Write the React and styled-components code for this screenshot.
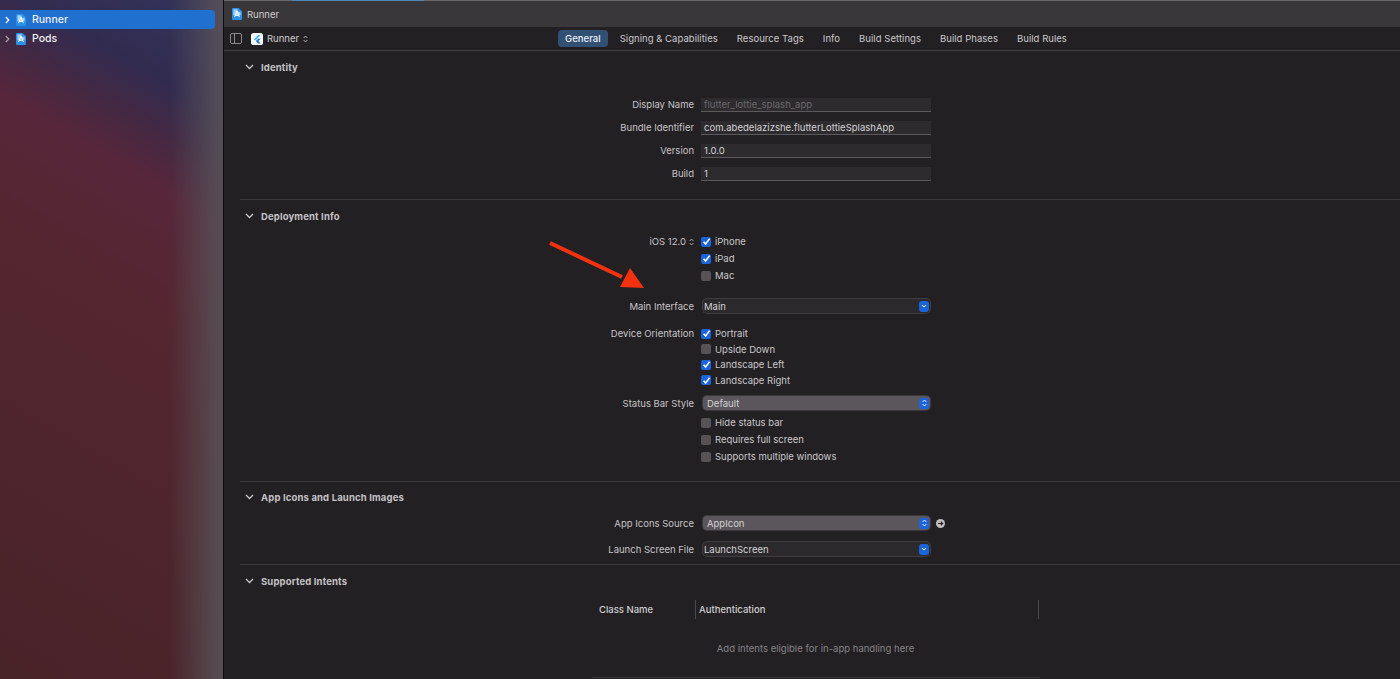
import React from 'react';
import styled, { createGlobalStyle } from 'styled-components';

const GlobalStyle = createGlobalStyle`
  html, body, #root {
    margin: 0;
    height: 100%;
    overflow: hidden;
  }
  body {
    background: #232024;
    font-family: Inter, "Liberation Sans", sans-serif;
    -webkit-font-smoothing: antialiased;
  }
`;

const FileIcon = () => (
  <svg width="10" height="12" viewBox="0 0 10 12">
    <path d="M1 0h5.6L10 3.2V11a1 1 0 0 1-1 1H1a1 1 0 0 1-1-1V1a1 1 0 0 1 1-1z" fill="#2b90e8" />
    <path d="M1.4 1.2h4.2v2.6h3v3.4H1.4z" fill="#a5d3f5" />
    <path d="M5 3 2.6 9M5 3l2.4 6M3.2 7.4h3.6" stroke="#fff" strokeWidth="1" fill="none" />
  </svg>
);

const Chevron = ({ color }) => (
  <svg width="5" height="8" viewBox="0 0 5 8">
    <path d="M.8 1 3.8 4 .8 7" stroke={color} strokeWidth="1.2" fill="none" />
  </svg>
);

const Disclosure = () => (
  <svg width="9" height="6" viewBox="0 0 9 6">
    <path d="M1 1 4.5 4.5 8 1" stroke="#c8c6c8" strokeWidth="1.3" fill="none" />
  </svg>
);

const UpDown = ({ color = '#b5b3b5' }) => (
  <svg width="5" height="8" viewBox="0 0 5 8">
    <path d="M.6 3 2.5 1 4.4 3M.6 5 2.5 7 4.4 5" stroke={color} strokeWidth=".9" fill="none" />
  </svg>
);

const CheckMark = () => (
  <svg width="9" height="9" viewBox="0 0 9 9">
    <path d="M1.6 4.8 3.6 7 7.6 1.6" stroke="#fff" strokeWidth="1.5" fill="none" />
  </svg>
);

const FlutterIcon = () => (
  <svg width="12" height="12" viewBox="0 0 12 12">
    <rect width="12" height="12" rx="2.6" fill="#f4f6f8" />
    <path d="M7.2 2 3 6.2l1.3 1.3L9.6 2z" fill="#3fb6f0" />
    <path d="M7.2 5.8 4.9 8.1 7.2 10.4h2.4L7.3 8.1l2.3-2.3z" fill="#1c74c8" />
  </svg>
);

const Sidebar = styled.aside`
  flex: 0 0 223px;
  border-right: 1px solid #0e0d0f;
  box-sizing: content-box;
  padding-top: 10px;
  background:
    linear-gradient(to right, rgba(88, 82, 88, 0) 76%, rgba(88, 82, 88, 0.85) 98%),
    linear-gradient(210deg, #33345a 0, #322b50 100px, #452842 150px, #58263a 195px, #542630 300px, #482328 690px);
`;

const TreeRow = styled.div`
  display: flex;
  align-items: center;
  height: 19px;
  width: 215px;
  border-radius: 0 4px 4px 0;
  padding-left: 5px;
  box-sizing: border-box;
  gap: 6px;
  background: ${(props) => (props.$selected ? '#1f70cf' : 'transparent')};
`;

const TreeLabel = styled.span`
  font-size: 10.5px;
  font-weight: 500;
  color: #f1eff3;
`;

const Main = styled.main`
  flex: 1;
  position: relative;
  display: flex;
  flex-direction: column;
  min-width: 0;
`;

const TitleBar = styled.header`
  height: 27px;
  display: flex;
  align-items: center;
  gap: 5px;
  padding-left: 8px;
  background: #3a373b;
  border-top: 1px solid #6b686b;
  box-sizing: border-box;
`;

const TitleText = styled.span`
  font-size: 9.5px;
  color: #cfcdcf;
`;

const AccentLine = styled.i`
  position: absolute;
  top: 0;
  left: 68px;
  width: 132px;
  height: 1px;
  background: #4d87b8;
`;

const TabBar = styled.nav`
  height: 24px;
  display: flex;
  align-items: center;
  background: #232024;
  border-bottom: 1px solid #423f43;
  box-sizing: border-box;
`;

const SchemeGroup = styled.div`
  flex: 0 0 334px;
  display: flex;
  align-items: center;
  gap: 4px;
  padding-left: 6px;
  box-sizing: border-box;
`;

const PanelToggle = styled.span`
  width: 12px;
  height: 11px;
  margin-right: 5px;
  border: 1px solid #8b898b;
  border-radius: 2px;
  box-sizing: border-box;
  display: flex;
  &::before {
    content: '';
    width: 3px;
    border-right: 1px solid #8b898b;
  }
`;

const SchemeName = styled.span`
  font-size: 9.5px;
  color: #cfcdcf;
`;

const Tabs = styled.div`
  display: flex;
  align-items: center;
  gap: 5px;
`;

const Tab = styled.span`
  padding: 0 7px;
  height: 17px;
  line-height: 17px;
  border-radius: 4px;
  font-size: 9.5px;
  letter-spacing: 0.04px;
  font-weight: ${(props) => (props.$active ? 500 : 400)};
  color: ${(props) => (props.$active ? '#eef1f5' : '#cac8ca')};
  background: ${(props) => (props.$active ? '#325074' : 'transparent')};
`;

const Content = styled.div`
  flex: 1;
  padding-left: 16px;
  overflow: hidden;
`;

const Section = styled.section`
  padding-bottom: ${(props) => props.$pb}px;
  border-bottom: ${(props) => (props.$last ? 'none' : '1px solid #3b383c')};
`;

const SectionHeader = styled.h2`
  margin: 0 0 ${(props) => props.$mb || 0}px;
  height: ${(props) => props.$h || 32}px;
  display: flex;
  align-items: center;
  gap: 7px;
  padding-left: 5px;
  font-size: 9.5px;
  font-weight: 700;
  letter-spacing: 0.15px;
  color: #c4c2c4;
`;

const FormRow = styled.div`
  display: flex;
  align-items: center;
  height: ${(props) => props.$h}px;
  margin-top: ${(props) => props.$mt || 0}px;
`;

const Label = styled.label`
  width: 454px;
  flex-shrink: 0;
  text-align: right;
  font-size: 9.5px;
  color: #c6c4c6;
  display: flex;
  justify-content: flex-end;
  align-items: center;
  gap: 3px;
`;

const Control = styled.div`
  margin-left: 7px;
  display: flex;
  align-items: center;
  gap: 6px;
`;

const TextField = styled.div`
  width: 230px;
  height: 14px;
  box-sizing: border-box;
  background: #2e2b2f;
  border-bottom: 1px solid #5c595d;
  padding-left: 3px;
  font-size: 9.5px;
  line-height: 14px;
  letter-spacing: 0.02px;
  color: ${(props) => (props.$muted ? '#6a676b' : '#d3d1d3')};
`;

const Select = styled.div`
  width: 227px;
  height: 14px;
  margin-left: 2px;
  box-sizing: border-box;
  display: flex;
  align-items: center;
  justify-content: space-between;
  border-radius: 4px;
  padding: 0 1px 0 ${(props) => (props.$filled ? 4 : 1)}px;
  font-size: 9.5px;
  color: #d3d1d3;
  background: ${(props) => (props.$filled ? '#5b565b' : '#2c292d')};
  box-shadow: 0 0 0 1px ${(props) => (props.$filled ? '#3c393d' : '#403d41')};
`;

const SelectButton = styled.span`
  width: 10px;
  height: 11px;
  border-radius: 3px;
  background: #1c64da;
  display: flex;
  align-items: center;
  justify-content: center;
`;

const Box = styled.span`
  width: 10px;
  height: 10px;
  box-sizing: border-box;
  border-radius: 2px;
  display: flex;
  align-items: center;
  justify-content: center;
  background: ${(props) => (props.$checked ? '#1c64da' : '#565256')};
`;

const CheckRow = styled.span`
  display: flex;
  align-items: center;
  gap: 4px;
  font-size: 9.5px;
  color: #c9c7c9;
`;

const GoButton = styled.span`
  width: 9px;
  height: 9px;
  border-radius: 50%;
  background: #c0bec0;
  display: flex;
  align-items: center;
  justify-content: center;
`;

const IntentsTable = styled.div`
  display: grid;
  grid-template-columns: 456px 343px;
  height: 19px;
  margin-top: 3px;
  font-size: 9.5px;
  font-weight: 500;
  color: #d0ced0;
`;

const ClassCell = styled.div`
  padding-left: 359px;
  border-right: 1px solid #4a474b;
  line-height: 19px;
`;

const AuthCell = styled.div`
  padding-left: 3px;
  border-right: 1px solid #4a474b;
  line-height: 19px;
`;

const EmptyNote = styled.div`
  width: 799px;
  margin-top: 24px;
  padding-left: 352px;
  box-sizing: border-box;
  text-align: center;
  font-size: 9.5px;
  letter-spacing: 0.02px;
  color: #868386;
`;

const TableEnd = styled.div`
  width: 448px;
  height: 1px;
  margin: 23px 0 0 352px;
  background: #3b383c;
`;

const Arrow = styled.svg`
  position: absolute;
  left: 320px;
  top: 236px;
`;

const tabs = ['General', 'Signing & Capabilities', 'Resource Tags', 'Info', 'Build Settings', 'Build Phases', 'Build Rules'];

const Check = ({ checked, children }) => (
  <CheckRow>
    <Box $checked={checked}>{checked && <CheckMark />}</Box>
    {children}
  </CheckRow>
);

const CheckLine = ({ label, checked, text, h, mt }) => (
  <FormRow $h={h} $mt={mt}>
    <Label>{label}</Label>
    <Control>
      <Check checked={checked}>{text}</Check>
    </Control>
  </FormRow>
);

const SelectLine = ({ label, value, filled, stepper, h = 22, mt, children }) => (
  <FormRow $h={h} $mt={mt}>
    <Label>{label}</Label>
    <Control>
      <Select $filled={filled}>
        {value}
        <SelectButton>
          {stepper ? (
            <UpDown color="#fff" />
          ) : (
            <svg width="6" height="4" viewBox="0 0 6 4">
              <path d="M1 1 3 3 5 1" stroke="#fff" strokeWidth="1" fill="none" />
            </svg>
          )}
        </SelectButton>
      </Select>
      {children}
    </Control>
  </FormRow>
);

const FieldLine = ({ label, value, muted }) => (
  <FormRow $h={23}>
    <Label>{label}</Label>
    <Control>
      <TextField $muted={muted}>{value}</TextField>
    </Control>
  </FormRow>
);

export default function App() {
  return (
    <Page>
      <GlobalStyle />
      <Sidebar>
        <TreeRow $selected>
          <Chevron color="#fff" />
          <FileIcon />
          <TreeLabel>Runner</TreeLabel>
        </TreeRow>
        <TreeRow>
          <Chevron color="#a9a3ad" />
          <FileIcon />
          <TreeLabel>Pods</TreeLabel>
        </TreeRow>
      </Sidebar>
      <Main>
        <AccentLine />
        <TitleBar>
          <FileIcon />
          <TitleText>Runner</TitleText>
        </TitleBar>
        <TabBar>
          <SchemeGroup>
            <PanelToggle />
            <FlutterIcon />
            <SchemeName>Runner</SchemeName>
            <UpDown />
          </SchemeGroup>
          <Tabs>
            {tabs.map((tab, index) => (
              <Tab key={tab} $active={index === 0}>
                {tab}
              </Tab>
            ))}
          </Tabs>
        </TabBar>
        <Content>
          <Section $pb={14}>
            <SectionHeader $mb={10}>
              <Disclosure />
              Identity
            </SectionHeader>
            <FieldLine label="Display Name" value="flutter_lottie_splash_app" muted />
            <FieldLine label="Bundle Identifier" value="com.abedelazizshe.flutterLottieSplashApp" />
            <FieldLine label="Version" value="1.0.0" />
            <FieldLine label="Build" value="1" />
          </Section>
          <Section $pb={16}>
            <SectionHeader $mb={1}>
              <Disclosure />
              Deployment Info
            </SectionHeader>
            <CheckLine
              h={17}
              checked
              text="iPhone"
              label={
                <>
                  iOS 12.0 <UpDown />
                </>
              }
            />
            <CheckLine h={17} checked text="iPad" />
            <CheckLine h={17} text="Mac" />
            <SelectLine label="Main Interface" value="Main" mt={11} />
            <CheckLine h={15.5} mt={9} label="Device Orientation" checked text="Portrait" />
            <CheckLine h={15.5} text="Upside Down" />
            <CheckLine h={15.5} checked text="Landscape Left" />
            <CheckLine h={15.5} checked text="Landscape Right" />
            <SelectLine label="Status Bar Style" value="Default" filled stepper mt={4} />
            <CheckLine h={17} text="Hide status bar" />
            <CheckLine h={17} text="Requires full screen" />
            <CheckLine h={17} text="Supports multiple windows" />
          </Section>
          <Section $pb={4}>
            <SectionHeader $h={30}>
              <Disclosure />
              App Icons and Launch Images
            </SectionHeader>
            <SelectLine label="App Icons Source" value="AppIcon" filled stepper>
              <GoButton>
                <svg width="7" height="7" viewBox="0 0 7 7">
                  <path d="M1 3.5h4.6M3.8 1.6l1.9 1.9-1.9 1.9" stroke="#232024" strokeWidth="1.1" fill="none" />
                </svg>
              </GoButton>
            </SelectLine>
            <SelectLine label="Launch Screen File" value="LaunchScreen" mt={4} />
          </Section>
          <Section $last>
            <SectionHeader>
              <Disclosure />
              Supported Intents
            </SectionHeader>
            <IntentsTable>
              <ClassCell>Class Name</ClassCell>
              <AuthCell>Authentication</AuthCell>
            </IntentsTable>
            <EmptyNote>Add intents eligible for in-app handling here</EmptyNote>
            <TableEnd />
          </Section>
        </Content>
        <Arrow width="110" height="60" viewBox="0 0 110 60">
          <path d="M6 7 78 41" stroke="#f2310f" strokeWidth="4" fill="none" />
          <path d="M100 52 76 51 86 32z" fill="#f2310f" />
        </Arrow>
      </Main>
    </Page>
  );
}

const Page = styled.div`
  display: flex;
  height: 679px;
  width: 1400px;
  overflow: hidden;
`;
